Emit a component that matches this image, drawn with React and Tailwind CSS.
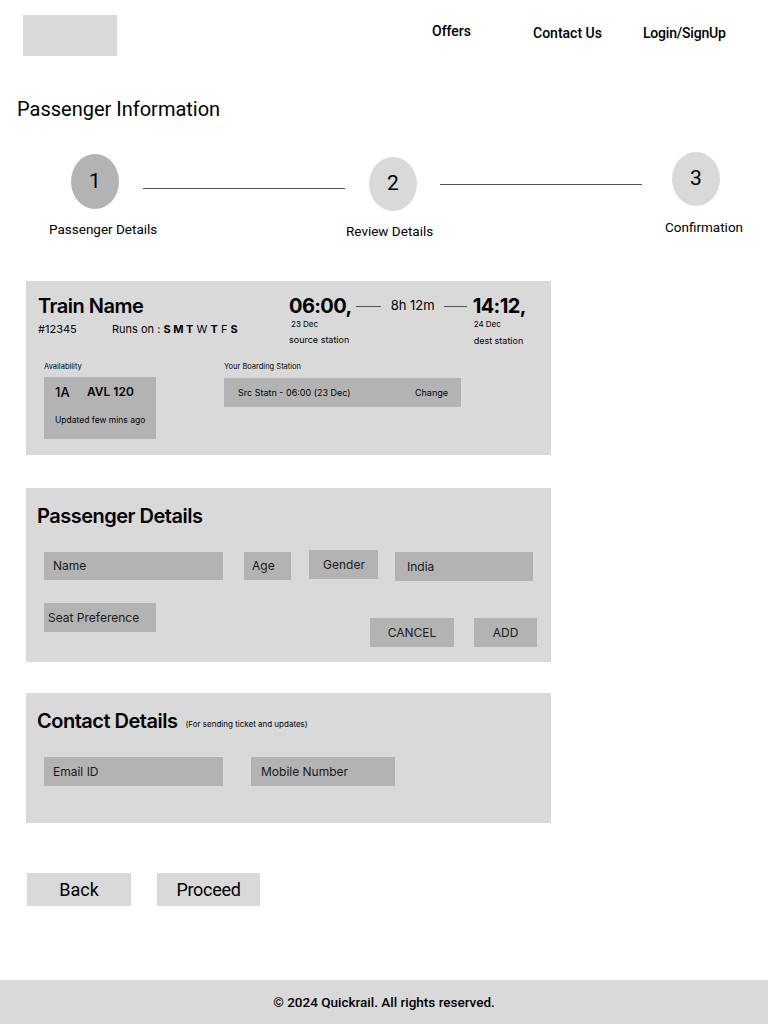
import React from "react";

const field = "bg-[#b3b3b3] flex items-center text-[12px] text-[#1a1a1a]";

export default function App() {
  return (
    <div className="relative w-[768px] h-[1024px] bg-white text-black font-['Inter',sans-serif] overflow-hidden">
      {/* header */}
      <header className="flex items-start pl-[23px] pt-[15px] font-['Roboto',sans-serif] font-medium text-[14px]">
        <div className="w-[94px] h-[41px] bg-[#d9d9d9]" />
        <nav className="flex ml-[315px]">
          <span className="w-[101px] mt-[6px] leading-[20px]">Offers</span>
          <span className="w-[110px] mt-[8px] leading-[20px]">Contact Us</span>
          <span className="mt-[8px] leading-[20px] tracking-[-0.2px]">Login/SignUp</span>
        </nav>
      </header>

      <h1 className="ml-[17px] mt-[39px] text-[20px] leading-[28px] font-['Roboto',sans-serif]">
        Passenger Information
      </h1>

      {/* stepper */}
      <div className="mt-[29px] font-['Roboto',sans-serif]">
        <div className="flex items-start h-[59px]">
          <div className="ml-[71px] mt-[2px] w-[48px] h-[55px] rounded-[50%] bg-[#b3b3b3] flex items-center justify-center text-[21px]">1</div>
          <div className="ml-[24px] mt-[36px] w-[202px] h-px bg-[#555]" />
          <div className="ml-[24px] mt-[5px] w-[48px] h-[54px] rounded-[50%] bg-[#d9d9d9] flex items-center justify-center text-[21px]">2</div>
          <div className="ml-[23px] mt-[32px] w-[202px] h-px bg-[#555]" />
          <div className="ml-[30px] w-[48px] h-[54px] rounded-[50%] bg-[#d9d9d9] flex items-center justify-center text-[21px]">3</div>
        </div>
        <div className="flex items-start text-[13.5px] leading-[20px]">
          <span className="ml-[49px] mt-[8px] w-[297px]">Passenger Details</span>
          <span className="mt-[10px] w-[319px]">Review Details</span>
          <span className="mt-[6px]">Confirmation</span>
        </div>
      </div>

      {/* train card */}
      <section className="ml-[26px] mt-[40px] w-[525px] h-[174px] bg-[#d9d9d9] pl-[12px] pt-[12px]">
        <div className="flex items-start">
          <div className="w-[251px]">
            <div className="text-[20px] font-semibold leading-[26px] tracking-[-0.5px]">Train Name</div>
            <div className="flex text-[11px] leading-[14px] mt-[3px]">
              <span className="w-[74px]">#12345</span>
              <span>
                Runs on : <b>S M T</b> W <b>T</b> F <b>S</b>
              </span>
            </div>
          </div>
          <div className="flex items-start">
            <div className="flex flex-col">
              <span className="text-[20px] font-bold leading-[26px] tracking-[-0.6px]">06:00,</span>
              <span className="text-[8px] leading-[10px] ml-[2px]">23 Dec</span>
              <span className="text-[9px] leading-[12px] mt-[5px]">source station</span>
            </div>
            <div className="flex items-center h-[26px]">
              <span className="ml-[4px] w-[25px] h-px bg-[#555]" />
              <span className="ml-[10px] text-[13px]">8h 12m</span>
              <span className="ml-[9px] w-[23px] h-px bg-[#555]" />
            </div>
            <div className="flex flex-col ml-[6px]">
              <span className="text-[20px] font-bold leading-[26px] tracking-[-0.6px]">14:12,</span>
              <span className="text-[8px] leading-[10px] ml-[1px]">24 Dec</span>
              <span className="text-[9px] leading-[12px] mt-[6px] ml-[1px]">dest station</span>
            </div>
          </div>
        </div>
        <div className="flex items-start mt-[15px] pl-[6px]">
          <div className="w-[180px]">
            <div className="text-[7.5px] leading-[10px]">Availability</div>
            <div className="mt-[5px] w-[112px] h-[62px] bg-[#b3b3b3] pl-[11px] pt-[7px]">
              <div className="flex text-[12px] font-semibold leading-[16px]">
                <span className="w-[32px] font-medium text-[13px]">1A</span>
                <span>AVL 120</span>
              </div>
              <div className="text-[8.5px] mt-[14px]">Updated few mins ago</div>
            </div>
          </div>
          <div>
            <div className="text-[7.5px] leading-[10px]">Your Boarding Station</div>
            <div className="mt-[6px] w-[237px] h-[29px] bg-[#b3b3b3] flex items-center justify-between pl-[14px] pr-[13px] text-[9px]">
              <span>Src Statn - 06:00 (23 Dec)</span>
              <span>Change</span>
            </div>
          </div>
        </div>
      </section>

      {/* passenger details */}
      <section className="ml-[26px] mt-[33px] w-[525px] h-[174px] bg-[#d9d9d9] pt-[14px]">
        <h2 className="ml-[11px] text-[20px] font-semibold leading-[28px] tracking-[-0.5px]">Passenger Details</h2>
        <div className="flex items-start mt-[20px] ml-[18px]">
          <div className={`${field} w-[179px] h-[28px] mt-[2px] pl-[9px]`}>Name</div>
          <div className={`${field} w-[47px] h-[28px] mt-[2px] ml-[21px] pl-[8px]`}>Age</div>
          <div className={`${field} w-[69px] h-[29px] ml-[18px] pl-[14px]`}>Gender</div>
          <div className={`${field} w-[138px] h-[29px] mt-[2px] ml-[17px] pl-[12px]`}>India</div>
        </div>
        <div className="flex items-start mt-[22px] ml-[18px]">
          <div className={`${field} w-[112px] h-[29px] pl-[4px]`}>Seat Preference</div>
          <div className={`${field} w-[84px] h-[29px] mt-[15px] ml-[214px] justify-center`}>CANCEL</div>
          <div className={`${field} w-[63px] h-[29px] mt-[15px] ml-[20px] justify-center`}>ADD</div>
        </div>
      </section>

      {/* contact details */}
      <section className="ml-[26px] mt-[31px] w-[525px] h-[130px] bg-[#d9d9d9] pt-[14px]">
        <div className="flex items-end ml-[11px]">
          <h2 className="text-[20px] font-semibold leading-[28px] tracking-[-0.5px]">Contact Details</h2>
          <span className="ml-[8px] mb-[6px] text-[8px] leading-[10px]">(For sending ticket and updates)</span>
        </div>
        <div className="flex items-start mt-[22px] ml-[18px]">
          <div className={`${field} w-[179px] h-[29px] pl-[9px]`}>Email ID</div>
          <div className={`${field} w-[144px] h-[29px] ml-[28px] pl-[10px]`}>Mobile Number</div>
        </div>
      </section>

      {/* actions */}
      <div className="flex ml-[27px] mt-[50px] gap-[26px] font-['Roboto',sans-serif] text-[18px]">
        <button className="w-[104px] h-[33px] bg-[#d9d9d9] flex items-center justify-center">Back</button>
        <button className="w-[103px] h-[33px] bg-[#d9d9d9] flex items-center justify-center tracking-[-0.3px]">Proceed</button>
      </div>

      <footer className="absolute bottom-0 left-0 w-full h-[44px] bg-[#d9d9d9] flex items-center justify-center font-['Roboto',sans-serif] font-medium text-[13.5px]">
        © 2024 Quickrail. All rights reserved.
      </footer>
    </div>
  );
}
